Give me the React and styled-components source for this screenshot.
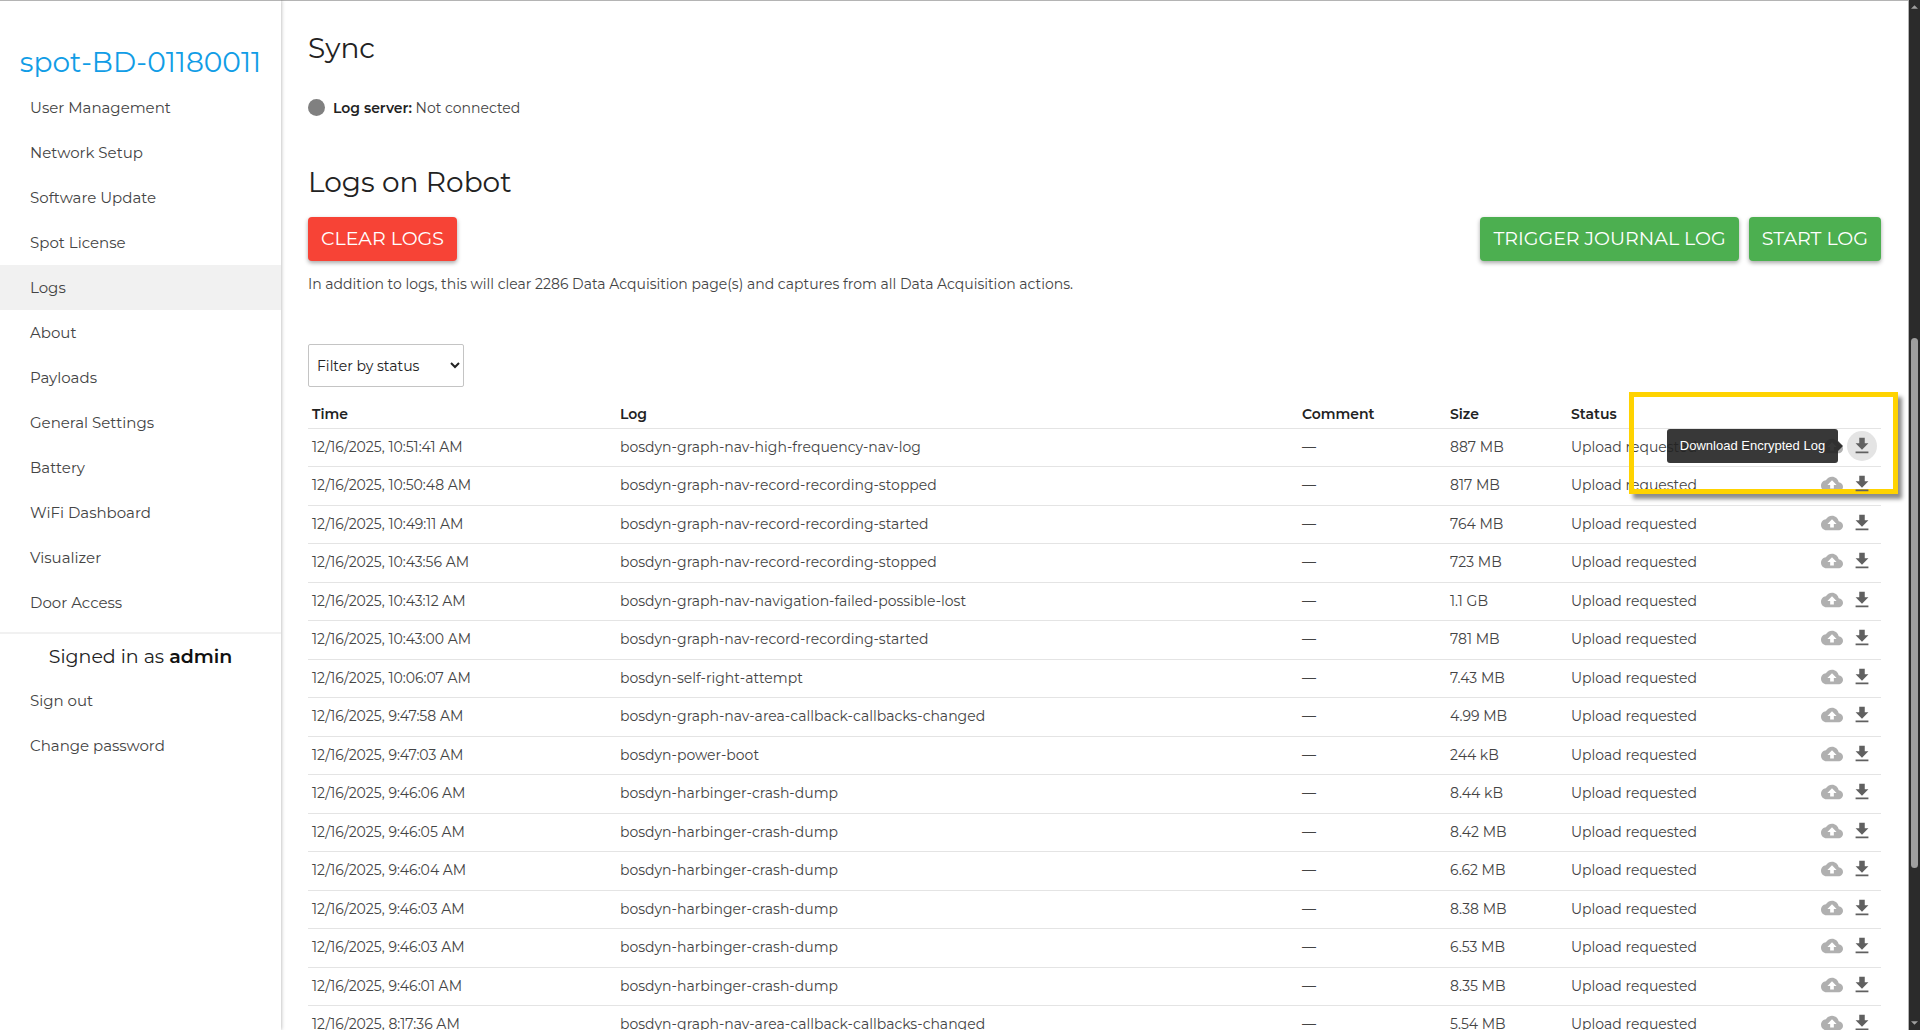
import React from "react";
import styled, { createGlobalStyle, css } from "styled-components";

const GlobalStyle = createGlobalStyle`
  * {
    box-sizing: border-box;
  }
  body {
    margin: 0;
    background: #fff;
    color: #444;
    font-family: Montserrat, Inter, sans-serif;
    font-size: 14px;
  }
`;

const Page = styled.div`
  display: grid;
  grid-template-columns: 281px 1fr 12px;
  height: 100vh;
  overflow: hidden;
`;

const Sidebar = styled.aside`
  border-top: 1px solid #b4b4b4;
  box-shadow: 0 0 4px rgba(0, 0, 0, 0.35);
  padding-top: 34px;
  z-index: 1;
`;

const RobotName = styled.h1`
  margin: 0;
  height: 50px;
  line-height: 55px;
  text-align: center;
  white-space: nowrap;
  font-size: 28px;
  font-weight: 400;
  color: #119de6;
`;

const NavItem = styled.a`
  display: block;
  height: 45px;
  padding-left: 30px;
  line-height: 45px;
  font-size: 15px;
  text-decoration: none;
  color: #444;
  background: ${(props) => (props.$active ? "#f1f1f1" : "transparent")};
`;

const Account = styled.div`
  margin-top: 7px;
  border-top: 2px solid #f1f1f1;
`;

const SignedIn = styled.p`
  margin: 0;
  height: 44px;
  line-height: 46px;
  text-align: center;
  font-size: 19px;
  color: #222;

  b {
    font-weight: 600;
    color: #111;
  }
`;

const Main = styled.main`
  border-top: 1px solid #b4b4b4;
  padding: 27px 27px 0;
  min-width: 0;
  overflow: hidden;
`;

const Heading = styled.h2`
  margin: 0;
  line-height: 40px;
  font-size: 28px;
  font-weight: 400;
  color: #222;
`;

const ServerStatus = styled.p`
  display: flex;
  align-items: center;
  gap: 8px;
  margin: 28px 0 42px;
  line-height: 24px;

  b {
    font-weight: 600;
    color: #222;
  }
`;

const Dot = styled.span`
  width: 17px;
  height: 17px;
  margin-bottom: 2px;
  border-radius: 50%;
  background: #808080;
`;

const Toolbar = styled.div`
  display: flex;
  gap: 10px;
  margin-top: 15px;
`;

const colors = { red: "#f74336", green: "#4caf50" };

const Button = styled.button`
  height: 44px;
  padding: 0 13px 2px;
  border: none;
  border-radius: 4px;
  background: ${(props) => colors[props.$color]};
  box-shadow: 0 2px 4px rgba(0, 0, 0, 0.35);
  color: #fff;
  font-family: inherit;
  font-size: 19px;
  font-weight: 400;
  text-transform: uppercase;
  cursor: pointer;
`;

const Spacer = styled.div`
  flex: 1;
`;

const Note = styled.p`
  margin: 11px 0 48px;
  line-height: 24px;
`;

const Filter = styled.select`
  display: block;
  width: 156px;
  height: 43px;
  padding: 0 4px;
  border: 1px solid #c4c4c4;
  border-radius: 2px;
  background: #fff;
  color: #222;
  font-family: inherit;
  font-size: 14px;
`;

const Table = styled.table`
  width: 100%;
  margin-top: 12px;
  table-layout: fixed;
  border-collapse: separate;
  border-spacing: 0;
`;

const Col = styled.col`
  width: ${(props) => props.$width};
`;

const Th = styled.th`
  height: 30px;
  padding: 0 4px;
  border-bottom: 1px solid #e4e4e4;
  text-align: left;
  font-weight: 600;
  color: #222;
`;

const Row = styled.tr`
  height: 38px;

  &:nth-child(even) {
    height: 39px;
  }
`;

const Td = styled.td`
  padding: 0 4px 2px;
  border-bottom: 1px solid #e4e4e4;
  white-space: nowrap;
`;

const ActionsTd = styled(Td)`
  padding-top: 2px;
  vertical-align: top;
`;

const Actions = styled.div`
  display: flex;
  justify-content: flex-end;
`;

const IconWrap = styled.div`
  position: relative;
`;

const IconButton = styled.button`
  display: flex;
  align-items: center;
  justify-content: center;
  width: 30px;
  height: 30px;
  padding: 0;
  border: none;
  border-radius: 50%;
  background: transparent;
  color: #606060;
  cursor: pointer;

  ${(props) =>
    props.$hovered &&
    css`
      background: #e4e4e4;
    `}

  &:disabled {
    color: #b0b0b0;
  }

  svg {
    width: 22px;
    height: 22px;
    fill: currentColor;
  }
`;

const Tooltip = styled.span`
  position: absolute;
  top: -2px;
  right: 39px;
  width: 171px;
  line-height: 34px;
  border-radius: 3px;
  background: rgba(34, 34, 34, 0.9);
  color: #fff;
  font-family: "Liberation Sans", Arial, sans-serif;
  font-size: 13px;
  text-align: center;

  &::after {
    content: "";
    position: absolute;
    left: 100%;
    top: 12px;
    border: 5px solid transparent;
    border-right: none;
    border-left-color: rgba(34, 34, 34, 0.9);
  }
`;

const Highlight = styled.div`
  position: absolute;
  top: -39px;
  right: -21px;
  width: 269px;
  height: 102px;
  border: 5px solid #ffd300;
  box-shadow: 4px 5px 4px rgba(0, 0, 0, 0.45);
  pointer-events: none;
`;

const Scrollbar = styled.div`
  display: flex;
  flex-direction: column;
  align-items: center;
  padding: 5px 0;
  border-left: 1px solid #b4b4b4;
  background: #2b2b2b;

  svg {
    width: 7px;
    height: 4px;
    fill: #9f9f9f;
  }
`;

const Track = styled.div`
  flex: 1;
  width: 7px;
  margin: 4px 0;
  padding-top: 325px;
`;

const Thumb = styled.div`
  height: 530px;
  border-radius: 4px;
  background: #9f9f9f;
`;

const CloudIcon = () => (
  <svg viewBox="0 0 24 24">
    <path d="M19.35 10.04C18.67 6.59 15.64 4 12 4 9.11 4 6.6 5.64 5.35 8.04 2.34 8.36 0 10.91 0 14c0 3.31 2.69 6 6 6h13c2.76 0 5-2.24 5-5 0-2.64-2.05-4.78-4.65-4.96zM14 13v4h-4v-4H7l5-5 5 5h-3z" />
  </svg>
);

const DownloadIcon = () => (
  <svg viewBox="0 0 24 24">
    <path d="M19 9h-4V3H9v6H5l7 7 7-7zM5 18v2h14v-2H5z" />
  </svg>
);

const navItems = [
  "User Management",
  "Network Setup",
  "Software Update",
  "Spot License",
  "Logs",
  "About",
  "Payloads",
  "General Settings",
  "Battery",
  "WiFi Dashboard",
  "Visualizer",
  "Door Access",
];

const logs = [
  ["10:51:41 AM", "bosdyn-graph-nav-high-frequency-nav-log", "887 MB"],
  ["10:50:48 AM", "bosdyn-graph-nav-record-recording-stopped", "817 MB"],
  ["10:49:11 AM", "bosdyn-graph-nav-record-recording-started", "764 MB"],
  ["10:43:56 AM", "bosdyn-graph-nav-record-recording-stopped", "723 MB"],
  ["10:43:12 AM", "bosdyn-graph-nav-navigation-failed-possible-lost", "1.1 GB"],
  ["10:43:00 AM", "bosdyn-graph-nav-record-recording-started", "781 MB"],
  ["10:06:07 AM", "bosdyn-self-right-attempt", "7.43 MB"],
  ["9:47:58 AM", "bosdyn-graph-nav-area-callback-callbacks-changed", "4.99 MB"],
  ["9:47:03 AM", "bosdyn-power-boot", "244 kB"],
  ["9:46:06 AM", "bosdyn-harbinger-crash-dump", "8.44 kB"],
  ["9:46:05 AM", "bosdyn-harbinger-crash-dump", "8.42 MB"],
  ["9:46:04 AM", "bosdyn-harbinger-crash-dump", "6.62 MB"],
  ["9:46:03 AM", "bosdyn-harbinger-crash-dump", "8.38 MB"],
  ["9:46:03 AM", "bosdyn-harbinger-crash-dump", "6.53 MB"],
  ["9:46:01 AM", "bosdyn-harbinger-crash-dump", "8.35 MB"],
  ["8:17:36 AM", "bosdyn-graph-nav-area-callback-callbacks-changed", "5.54 MB"],
];

const LogRow = ({ time, name, size, hovered }) => (
  <Row>
    <Td>12/16/2025, {time}</Td>
    <Td>{name}</Td>
    <Td>—</Td>
    <Td>{size}</Td>
    <Td>Upload requested</Td>
    <ActionsTd>
      <Actions>
        <IconButton disabled aria-label="Upload log">
          <CloudIcon />
        </IconButton>
        <IconWrap>
          <IconButton $hovered={hovered} aria-label="Download Encrypted Log">
            <DownloadIcon />
          </IconButton>
          {hovered && <Tooltip role="tooltip">Download Encrypted Log</Tooltip>}
          {hovered && <Highlight />}
        </IconWrap>
      </Actions>
    </ActionsTd>
  </Row>
);

const App = () => {
  return (
    <>
      <GlobalStyle />
      <Page>
        <Sidebar>
          <RobotName>spot-BD-01180011</RobotName>
          <nav>
            {navItems.map((item) => (
              <NavItem key={item} href="#" $active={item === "Logs"}>
                {item}
              </NavItem>
            ))}
          </nav>
          <Account>
            <SignedIn>
              Signed in as <b>admin</b>
            </SignedIn>
            <NavItem href="#">Sign out</NavItem>
            <NavItem href="#">Change password</NavItem>
          </Account>
        </Sidebar>

        <Main>
          <Heading>Sync</Heading>
          <ServerStatus>
            <Dot />
            <span>
              <b>Log server:</b> Not connected
            </span>
          </ServerStatus>

          <Heading>Logs on Robot</Heading>
          <Toolbar>
            <Button $color="red">Clear logs</Button>
            <Spacer />
            <Button $color="green">Trigger journal log</Button>
            <Button $color="green">Start log</Button>
          </Toolbar>
          <Note>
            In addition to logs, this will clear 2286 Data Acquisition page(s)
            and captures from all Data Acquisition actions.
          </Note>

          <Filter aria-label="Filter by status">
            <option>Filter by status</option>
          </Filter>

          <Table>
            <colgroup>
              <Col $width="308px" />
              <Col $width="auto" />
              <Col $width="148px" />
              <Col $width="121px" />
              <Col $width="154px" />
              <Col $width="160px" />
            </colgroup>
            <thead>
              <tr>
                <Th>Time</Th>
                <Th>Log</Th>
                <Th>Comment</Th>
                <Th>Size</Th>
                <Th>Status</Th>
                <Th />
              </tr>
            </thead>
            <tbody>
              {logs.map(([time, name, size], i) => (
                <LogRow
                  key={i}
                  time={time}
                  name={name}
                  size={size}
                  hovered={i === 0}
                />
              ))}
            </tbody>
          </Table>
        </Main>

        <Scrollbar>
          <svg viewBox="0 0 8 4">
            <path d="M0 4 4 0l4 4z" />
          </svg>
          <Track>
            <Thumb />
          </Track>
          <svg viewBox="0 0 8 4">
            <path d="M0 0l4 4 4-4z" />
          </svg>
        </Scrollbar>
      </Page>
    </>
  );
};

export default App;
